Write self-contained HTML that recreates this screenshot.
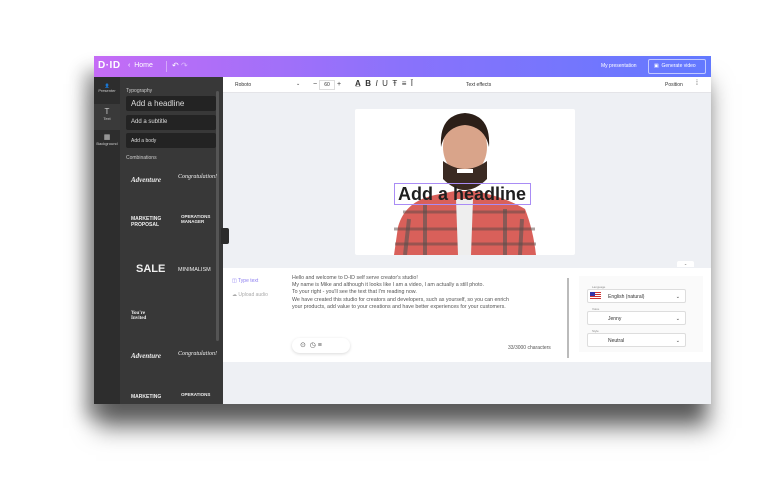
<!DOCTYPE html>
<html><head><style>
*{margin:0;padding:0;box-sizing:border-box}
body{width:768px;height:501px;background:#fff;position:relative;overflow:hidden;font-family:"Liberation Sans",sans-serif}
.a{position:absolute}
.win{left:94px;top:56px;width:617px;height:348px;background:#eef0f4;box-shadow:0 26px 22px -2px rgba(0,0,0,.5),-10px 14px 16px rgba(0,0,0,.3);overflow:hidden}
.top{left:0;top:0;width:617px;height:21px;background:linear-gradient(90deg,#c56cf6,#8a72fb 50%,#6279ff)}
.t{color:#fff;font-size:6px}
.rail{left:0;top:21px;width:26px;height:327px;background:#2d2d2d}
.pan{left:26px;top:21px;width:103px;height:327px;background:#383838}
.btn{left:32px;width:90px;background:#232323;border-radius:2px;color:#ddd}
.lt{color:#ccc;font-size:5px}
.tb{left:129px;top:21px;width:488px;height:16px;background:#fff;border-bottom:1px solid #e4e4e8;font-size:5px;color:#333}
.w{color:#eee;font-size:6px;font-weight:bold}
.dd{width:99px;height:14px;border:1px solid #ddd;border-radius:2px;background:#fff;font-size:5px;color:#333;padding:4px 0 0 20px}
</style></head><body>
<div class="a win">
 <div class="a top">
  <div class="a t" style="left:4px;top:4px;font-size:10px;font-weight:bold;letter-spacing:.5px">D·ID</div>
  <div class="a t" style="left:34px;top:6px;font-size:7px">‹ &nbsp;Home</div>
  <div class="a" style="left:72px;top:5px;width:1px;height:11px;background:rgba(255,255,255,.4)"></div>
  <div class="a t" style="left:78px;top:5px;font-size:8px">↶ <span style="opacity:.5">↷</span></div>
  <div class="a t" style="left:507px;top:7px;font-size:5px">My presentation</div>
  <div class="a" style="left:554px;top:3px;width:58px;height:15px;border:1px solid rgba(255,255,255,.6);border-radius:2px"></div>
  <div class="a t" style="left:560px;top:7px;font-size:5px">▣ &nbsp;Generate video</div>
 </div>
 <div class="a rail">
  <div class="a lt" style="left:0;top:6px;width:26px;text-align:center;font-size:4px">👤<br>Presenter</div>
  <div class="a" style="left:0;top:27px;width:26px;height:26px;background:#3a3a3a"></div>
  <div class="a lt" style="left:0;top:30px;width:26px;text-align:center;font-size:4px"><span style="font-size:8px">T</span><br>Text</div>
  <div class="a lt" style="left:0;top:56px;width:26px;text-align:center;font-size:4px"><span style="font-size:7px">▦</span><br>Background</div>
 </div>
 <div class="a pan">
  <div class="a lt" style="left:6px;top:11px">Typography</div>
  <div class="a" style="left:96px;top:14px;width:3px;height:250px;background:#555;border-radius:2px"></div>
 </div>
 <div class="a btn" style="top:40px;height:15px;font-size:8px;padding:3px 5px">Add a headline</div>
 <div class="a btn" style="top:59px;height:15px;font-size:6px;padding:4px 5px">Add a subtitle</div>
 <div class="a btn" style="top:77px;height:15px;font-size:5px;padding:5px 5px">Add a body</div>
 <div class="a lt" style="left:32px;top:99px">Combinations</div>
 <div class="a w" style="left:37px;top:120px;font-style:italic;font-family:'Liberation Serif',serif;font-size:7px">Adventure</div>
 <div class="a w" style="left:84px;top:118px;font-style:italic;font-family:'Liberation Serif',serif;font-weight:normal;font-size:6px">Congratulation!</div>
 <div class="a w" style="left:37px;top:160px;font-size:5px">MARKETING<br>PROPOSAL</div>
 <div class="a w" style="left:87px;top:158px;font-size:4.5px">OPERATIONS<br>MANAGER</div>
 <div class="a w" style="left:42px;top:207px;font-size:11px">SALE</div>
 <div class="a w" style="left:84px;top:211px;font-size:5.5px;font-weight:normal">MINIMALISM</div>
 <div class="a w" style="left:37px;top:255px;font-size:5px;font-family:'Liberation Serif',serif">You're<br>Invited</div>
 <div class="a w" style="left:37px;top:296px;font-style:italic;font-family:'Liberation Serif',serif;font-size:7px">Adventure</div>
 <div class="a w" style="left:84px;top:295px;font-style:italic;font-family:'Liberation Serif',serif;font-weight:normal;font-size:6px">Congratulation!</div>
 <div class="a w" style="left:37px;top:338px;font-size:5px">MARKETING</div>
 <div class="a w" style="left:87px;top:336px;font-size:4.5px">OPERATIONS</div>
 <div class="a" style="left:127px;top:172px;width:8px;height:16px;background:#2b2b2b;border-radius:0 2px 2px 0"></div>
 <div class="a tb">
  <div class="a" style="left:12px;top:5px">Roboto</div>
  <div class="a" style="left:73px;top:4px">⌄</div>
  <div class="a" style="left:90px;top:3px;font-size:7px">− <span style="display:inline-block;width:16px;height:10px;border:1px solid #ddd;font-size:5px;text-align:center;line-height:9px">60</span> +</div>
  <div class="a" style="left:132px;top:2px;font-size:8px;font-weight:bold">A̲ &nbsp;B &nbsp;<i style="font-weight:normal">I</i> &nbsp;<span style="font-weight:normal">U &nbsp;Ŧ &nbsp;≡ &nbsp;Ī</span></div>
  <div class="a" style="left:243px;top:5px">Text effects</div>
  <div class="a" style="left:442px;top:5px">Position</div>
  <div class="a" style="left:473px;top:3px;font-size:7px">⁞</div>
 </div>
 <div class="a" style="left:261px;top:53px;width:220px;height:146px;background:#fff;border-radius:2px"></div>
 <svg class="a" style="left:261px;top:53px" width="220" height="146">
  <path d="M39 146 L43 118 Q50 92 80 86 L100 82 L120 82 Q150 88 170 100 Q178 120 181 146 Z" fill="#d9605a"/>
  <path d="M50 146 L54 110 M70 146 L70 95 M150 146 L150 100 M165 146 L167 110" stroke="#555" stroke-width="4" opacity=".6"/>
  <path d="M39 120 L180 120 M40 135 L181 135 M48 103 L170 103" stroke="#5a4a48" stroke-width="3" opacity=".5"/>
  <path d="M101 90 L118 90 L116 146 L103 146 Z" fill="#eee"/>
  <ellipse cx="110" cy="38" rx="22" ry="28" fill="#d9a48a"/>
  <path d="M88 70 Q110 92 132 70 L132 52 Q110 68 88 52 Z" fill="#3a2a22"/>
  <path d="M86 38 Q84 6 110 4 Q136 6 134 38 Q130 18 110 16 Q90 18 86 38 Z" fill="#2c1f18"/>
  <rect x="102" y="60" width="16" height="4" fill="#fff"/>
 </svg>
 <div class="a" style="left:300px;top:127px;width:137px;height:22px;border:1px solid #a98cf5"></div>
 <div class="a" style="left:304px;top:128px;font-size:18px;font-weight:bold;color:#1f1f1f">Add a headline</div>
 <div class="a" style="left:583px;top:205px;width:17px;height:6px;background:#fff;border-radius:2px 2px 0 0;font-size:4px;text-align:center;color:#666">⌄</div>
 <div class="a" style="left:129px;top:212px;width:488px;height:94px;background:#fff"></div>
 <div class="a" style="left:138px;top:222px;font-size:5px;color:#8b7cf0">◫ Type text</div>
 <div class="a" style="left:138px;top:236px;font-size:5px;color:#aaa">☁ Upload audio</div>
 <div class="a" style="left:198px;top:219px;font-size:5.3px;color:#555;line-height:7.2px">Hello and welcome to D-ID self serve creator's studio!<br>My name is Mike and although it looks like I am a video, I am actually a still photo.<br>To your right - you'll see the text that I'm reading now.<br>We have created this studio for creators and developers, such as yourself, so you can enrich<br>your products, add value to your creations and have better experiences for your customers.</div>
 <div class="a" style="left:198px;top:282px;width:58px;height:15px;border-radius:8px;box-shadow:0 1px 3px rgba(0,0,0,.15);background:#fff;font-size:7px;color:#555;padding:3px 8px">⊙ &nbsp;◷ ≡</div>
 <div class="a" style="left:414px;top:289px;font-size:5px;color:#555">33/3000 characters</div>
 <div class="a" style="left:473px;top:222px;width:2px;height:80px;background:#bbb"></div>
 <div class="a" style="left:485px;top:220px;width:124px;height:76px;background:#fafafa"></div>
 <div class="a" style="left:498px;top:229px;font-size:3px;color:#888">Language</div>
 <div class="a dd" style="left:493px;top:233px">English (natural)<span style="float:right;margin-right:5px">⌄</span></div>
 <div class="a" style="left:496px;top:236px;width:11px;height:7px;background:linear-gradient(#c33 0 14%,#fff 14% 28%,#c33 28% 42%,#fff 42% 56%,#c33 56% 70%,#fff 70% 84%,#c33 84%)"></div>
 <div class="a" style="left:496px;top:236px;width:5px;height:4px;background:#33a"></div>
 <div class="a" style="left:498px;top:251px;font-size:3px;color:#888">Voice</div>
 <div class="a dd" style="left:493px;top:255px">Jenny<span style="float:right;margin-right:5px">⌄</span></div>
 <div class="a" style="left:498px;top:273px;font-size:3px;color:#888">Style</div>
 <div class="a dd" style="left:493px;top:277px">Neutral<span style="float:right;margin-right:5px">⌄</span></div>
</div>
</body></html>
